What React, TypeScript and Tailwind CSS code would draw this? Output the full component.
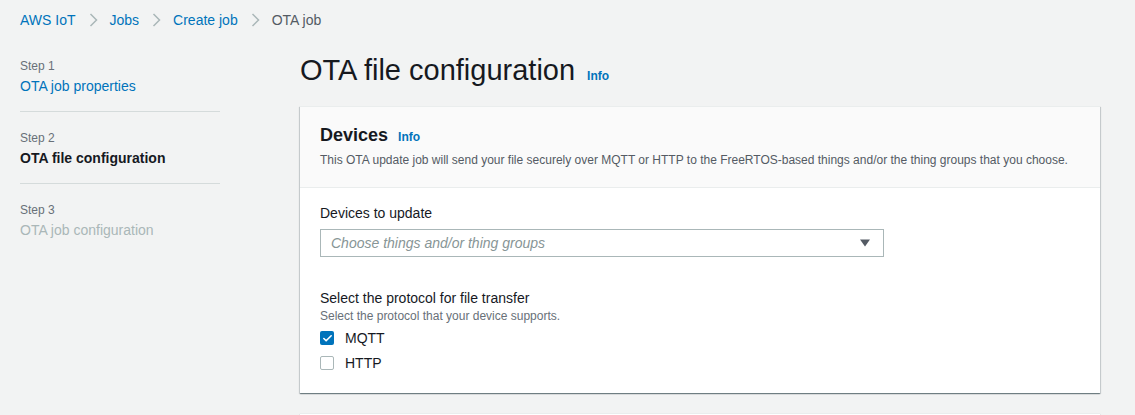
import { Check } from 'lucide-react';

const font = { fontFamily: '"Liberation Sans", Roboto, sans-serif' };

const Chevron = () => (
  <svg width="16" height="16" viewBox="0 0 16 16" className="mx-[9px] text-[#aab7b8]">
    <path d="M5.5 2l6 6-6 6" fill="none" stroke="currentColor" strokeWidth="1.5" />
  </svg>
);

const Breadcrumbs = () => (
  <nav className="flex h-10 items-center px-5 text-[14px]">
    <a className="text-[#0073bb]">AWS IoT</a>
    <Chevron />
    <a className="text-[#0073bb]">Jobs</a>
    <Chevron />
    <a className="text-[#0073bb]">Create job</a>
    <Chevron />
    <span className="text-[#545b64]">OTA job</span>
  </nav>
);

interface StepProps {
  step: number;
  title: string;
  state: 'done' | 'current' | 'todo';
  last?: boolean;
}

const Step = ({ step, title, state, last }: StepProps) => (
  <li className={last ? 'pt-[18px]' : 'border-b border-[#d5dbdb] pt-[18px] pb-[15px]'}>
    <div className="text-[12px] leading-4 text-[#687078]">Step {step}</div>
    <div
      className={
        state === 'done'
          ? 'mt-[2px] text-[14px] leading-5 text-[#0073bb]'
          : state === 'current'
            ? 'mt-[2px] text-[14px] leading-5 font-bold text-[#16191f]'
            : 'mt-[2px] text-[14px] leading-5 text-[#aab7b8]'
      }
    >
      {title}
    </div>
  </li>
);

const Checkbox = ({ checked, label }: { checked?: boolean; label: string }) => (
  <label className="flex h-5 items-center gap-[11px] text-[14px] text-[#16191f]">
    {checked ? (
      <span className="flex h-[14px] w-[14px] items-center justify-center rounded-[2px] bg-[#0073bb]">
        <Check size={11} strokeWidth={3.5} className="text-white" />
      </span>
    ) : (
      <span className="h-[14px] w-[14px] rounded-[2px] border border-[#aab7b8] bg-white" />
    )}
    {label}
  </label>
);

export default function App() {
  return (
    <div className="h-[415px] overflow-hidden bg-[#f2f3f3]" style={font}>
      <Breadcrumbs />
      <div className="flex pl-5">
        <ol className="w-[200px]">
          <Step step={1} title="OTA job properties" state="done" />
          <Step step={2} title="OTA file configuration" state="current" />
          <Step step={3} title="OTA job configuration" state="todo" last />
        </ol>
        <main className="ml-[80px] w-[800px] pt-3">
          <div className="flex items-baseline">
            <h1 className="text-[29px] leading-9 text-[#16191f]">OTA file configuration</h1>
            <a className="ml-3 text-[12px] font-bold text-[#0073bb]">Info</a>
          </div>

          <section className="mt-[18px] border-t border-[#eaeded] bg-white shadow-[0_1px_1px_0_rgba(0,28,36,0.4),1px_1px_1px_0_rgba(0,28,36,0.12),-1px_1px_1px_0_rgba(0,28,36,0.12)]">
            <header className="border-b border-[#eaeded] bg-[#fafafa] px-5 pt-4 pb-[19px]">
              <div className="flex items-baseline">
                <h2 className="text-[18px] leading-6 font-bold text-[#16191f]">Devices</h2>
                <a className="ml-[10px] text-[12px] font-bold text-[#0073bb]">Info</a>
              </div>
              <p className="mt-[5px] text-[12px] leading-4 text-[#545b64]">
                This OTA update job will send your file securely over MQTT or HTTP to the
                FreeRTOS-based things and/or the thing groups that you choose.
              </p>
            </header>

            <div className="px-5 pt-[15px] pb-5">
              <div className="text-[14px] leading-5 text-[#16191f]">Devices to update</div>
              <div className="mt-[6px] flex h-[28px] w-[564px] items-center justify-between border border-[#aab7b8] bg-white pr-[12px] pl-[10px]">
                <span className="text-[14px] text-[#879596] italic">Choose things and/or thing groups</span>
                <svg width="12" height="8" viewBox="0 0 12 8">
                  <path d="M1 0.5h10L6 7.5z" fill="#545b64" />
                </svg>
              </div>

              <div className="mt-[31px] text-[14px] leading-5 text-[#16191f]">
                Select the protocol for file transfer
              </div>
              <div className="text-[12px] leading-4 text-[#687078]">
                Select the protocol that your device supports.
              </div>
              <div className="mt-1 flex flex-col gap-[5px]">
                <Checkbox checked label="MQTT" />
                <Checkbox label="HTTP" />
              </div>
            </div>
          </section>

          <section className="mt-5 h-10 border-t border-[#eaeded] bg-white shadow-[0_1px_1px_0_rgba(0,28,36,0.3)]" />
        </main>
      </div>
    </div>
  );
}
